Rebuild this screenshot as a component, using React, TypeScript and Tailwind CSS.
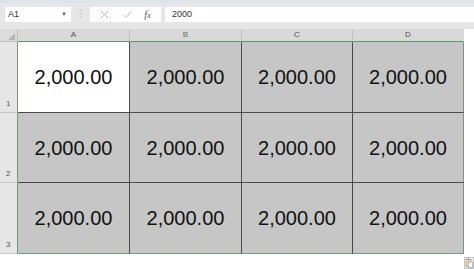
import React from 'react';

const COLS = [
  { key: 'A', w: 'w-[112px]' },
  { key: 'B', w: 'w-[112px]' },
  { key: 'C', w: 'w-[111px]' },
  { key: 'D', w: 'w-[111px]' },
];

const ROWS = [
  { n: 1, h: 'h-[71px]' },
  { n: 2, h: 'h-[70px]' },
  { n: 3, h: 'h-[71px]' },
];

export default function App() {
  return (
    <div className="w-[474px] h-[269px] bg-white overflow-hidden relative" style={{ fontFamily: '"Liberation Sans", Arial, sans-serif' }}>
      {/* Formula bar */}
      <div className="h-[29px] bg-[#e6e6e6] border-t-[3px] border-[#dde3ec] flex items-start pt-[4px]">
        <div className="ml-[5px] w-[66px] h-[15px] bg-white flex items-center justify-between pl-[3px] pr-[4px]">
          <span className="text-[9px] text-[#333]">A1</span>
          <span className="text-[6px] text-[#666]">▼</span>
        </div>
        <div className="w-[19px] h-[15px] flex items-center justify-center text-[9px] text-[#aaa]">⋮</div>
        <div className="w-[71px] h-[15px] bg-white flex items-center justify-around px-[4px]">
          <svg width="9" height="9" viewBox="0 0 10 10"><path d="M1 1 L9 9 M9 1 L1 9" stroke="#b5b5b5" strokeWidth="1" /></svg>
          <svg width="10" height="9" viewBox="0 0 10 10"><path d="M1 5.5 L4 8.5 L9.5 1.5" stroke="#b5b5b5" strokeWidth="1" fill="none" /></svg>
          <span className="text-[10px] italic text-[#555]" style={{ fontFamily: '"Liberation Serif", serif' }}>f<span className="text-[8px]">x</span></span>
        </div>
        <div className="ml-[4px] flex-1 h-[15px] bg-white flex items-center pl-[7px]">
          <span className="text-[9px] text-[#333]">2000</span>
        </div>
      </div>

      {/* Grid */}
      <div className="flex">
        {/* row headers */}
        <div className="w-[18px] flex flex-col">
          <div className="h-[13px] bg-[#dcdcdc] border-b border-r border-[#bdbdbd] flex items-end justify-end pr-[2px] pb-[1px]">
            <svg width="7" height="7" viewBox="0 0 7 7"><path d="M7 0 L7 7 L0 7 Z" fill="#b4b4b4" /></svg>
          </div>
          {ROWS.map(r => (
            <div key={r.n} className={`${r.h} bg-[#e6e6e6] border-r border-b border-r-[#6e9c80] border-b-[#c8c8c8] flex items-end pl-[6px] pb-[2px]`}>
              <span className="text-[8px] text-[#555]">{r.n}</span>
            </div>
          ))}
        </div>
        {COLS.map((c, ci) => (
          <div key={c.key} className={`${c.w} flex flex-col`}>
            <div className={`h-[13px] bg-[#d9d9d9] border-b border-b-[#5f9474] border-r ${ci === 3 ? 'border-r-[#d9d9d9]' : 'border-r-[#c2c2c2]'} flex items-center justify-center`}>
              <span className={`text-[8px] ${ci === 1 ? 'text-[#4b7d5d]' : 'text-[#505050]'}`}>{c.key}</span>
            </div>
            {ROWS.map((r, ri) => {
              const white = ci === 0 && ri === 0;
              const right = ci === 3 ? 'border-r-[#6e9c80]' : 'border-r-[#4a4a4a]';
              const bottom = ri === 2 ? 'border-b-[#6e9c80]' : 'border-b-[#4a4a4a]';
              return (
                <div
                  key={r.n}
                  className={`${r.h} ${white ? 'bg-white' : 'bg-[#c6c6c6]'} border-r border-b ${right} ${bottom} flex items-center justify-center`}
                >
                  <span className="text-[20px] text-[#111] leading-none">2,000.00</span>
                </div>
              );
            })}
          </div>
        ))}
      </div>

      {/* paste options */}
      <div className="absolute left-[464px] top-[257px] w-[10px] h-[12px] bg-[#eef2f6] border border-[#b9c4d0] flex items-center justify-center">
        <svg width="8" height="10" viewBox="0 0 8 10">
          <rect x="1" y="1.5" width="5" height="7" fill="#f2d59a" stroke="#c08a3a" strokeWidth="0.6" />
          <rect x="2.5" y="0.5" width="2" height="1.5" fill="#8a8a8a" />
          <rect x="3.5" y="4" width="4" height="5.5" fill="#fff" stroke="#7b94b5" strokeWidth="0.6" />
        </svg>
      </div>
    </div>
  );
}
